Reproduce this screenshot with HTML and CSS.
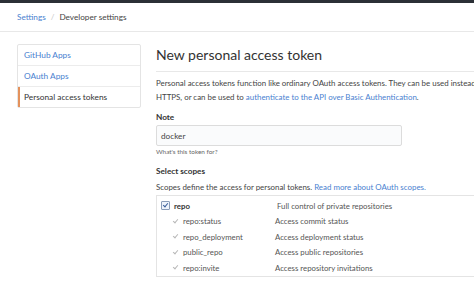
FILE: index.html
```html
<!DOCTYPE html>
<html>
<head>
<meta charset="utf-8">
<link rel="stylesheet" href="styles.css">
</head>
<body>
<div class="topbar"></div>
<div class="crumbs">
  <a class="crumb-link">Settings</a>
  <span class="sep">/</span>
  <span class="crumb-cur">Developer settings</span>
</div>
<div class="layout">
  <nav class="side">
    <a class="side-item">GitHub Apps</a>
    <a class="side-item">OAuth Apps</a>
    <a class="side-item selected">Personal access tokens</a>
  </nav>
  <main class="main">
    <h1 class="title">New personal access token</h1>
    <p class="intro">Personal access tokens function like ordinary OAuth access tokens. They can be used instead of a password for Git over<br>HTTPS, or can be used to <a class="link">authenticate to the API over Basic Authentication</a>.</p>
    <div class="field">
      <label class="label">Note</label>
      <div class="input">docker</div>
      <div class="hint">What's this token for?</div>
    </div>
    <div class="field scopes-field">
      <label class="label">Select scopes</label>
      <p class="scopes-desc">Scopes define the access for personal tokens. <a class="link">Read more about OAuth scopes.</a></p>
      <div class="scopes">
        <div class="row parent">
          <span class="cb checked"></span>
          <span class="name">repo</span>
          <span class="desc">Full control of private repositories</span>
        </div>
        <div class="row child">
          <span class="cb sub"></span>
          <span class="name">repo:status</span>
          <span class="desc">Access commit status</span>
        </div>
        <div class="row child">
          <span class="cb sub"></span>
          <span class="name">repo_deployment</span>
          <span class="desc">Access deployment status</span>
        </div>
        <div class="row child">
          <span class="cb sub"></span>
          <span class="name">public_repo</span>
          <span class="desc">Access public repositories</span>
        </div>
        <div class="row child">
          <span class="cb sub"></span>
          <span class="name">repo:invite</span>
          <span class="desc">Access repository invitations</span>
        </div>
      </div>
    </div>
  </main>
</div>
</body>
</html>
```
FILE: styles.css
```css
html, body {
  margin: 0;
  padding: 0;
  background: #fff;
  overflow: hidden;
  width: 474px;
  height: 282px;
  font-family: Lato, "Noto Sans", sans-serif;
  color: #24292e;
}
.topbar {
  height: 3px;
  background: #2b3036;
}
.crumbs {
  height: 28px;
  border-bottom: 1px solid #e8e8e8;
  display: flex;
  align-items: center;
  padding-left: 17px;
  font-size: 8.2px;
  gap: 5px;
}
.crumb-link { color: #4a7fd0; }
.sep { color: #c8c8c8; }
.crumb-cur { color: #444; }
.layout {
  display: flex;
  padding: 12px 0 0 17px;
  gap: 15px;
}
.side {
  width: 122px;
  flex: none;
  border: 1px solid #e4e4e4;
  border-radius: 2px;
  display: flex;
  flex-direction: column;
  align-self: flex-start;
}
.side-item {
  height: 20px;
  display: flex;
  align-items: center;
  padding-left: 6px;
  font-size: 8.3px;
  color: #4a7fd0;
  border-bottom: 1px solid #ececec;
}
.side-item:last-child { border-bottom: none; }
.side-item.selected {
  color: #333;
  border-left: 2px solid #e4925c;
  padding-left: 4px;
}
.main {
  width: 460px;
  flex: none;
}
.title {
  margin: 0;
  font-weight: 400;
  font-size: 14px;
  line-height: 22px;
  padding-bottom: 5px;
  border-bottom: 1px solid #e8e8e8;
  color: #333;
  white-space: nowrap;
}
.intro {
  margin: 4px 0 0;
  font-size: 7.9px;
  line-height: 14px;
  color: #444;
  white-space: nowrap;
}
.link { color: #4a7fd0; }
.field { margin-top: 7px; }
.scopes-field { margin-top: 10px; }
.label {
  display: block;
  font-weight: 700;
  font-size: 8.2px;
  line-height: 13px;
  color: #333;
}
.input {
  margin-top: 1px;
  width: 240px;
  height: 19px;
  border: 1px solid #dcdcdc;
  border-radius: 2px;
  background: #fafbfc;
  font-size: 8.2px;
  display: flex;
  align-items: center;
  padding-left: 4px;
  color: #444;
}
.hint {
  font-size: 6.4px;
  color: #666;
  margin-top: 2px;
}
.scopes-desc {
  margin: 3px 0 0;
  font-size: 7.9px;
  line-height: 13px;
  color: #444;
}
.scopes {
  margin-top: 1px;
  border: 1px solid #e4e4e4;
  border-right: none;
  padding: 2px 0 0 4px;
  width: 400px;
}
.row {
  display: flex;
  align-items: center;
  height: 15.5px;
  font-size: 7.8px;
  color: #555;
}
.row .desc { color: #555; }
.row .name { width: 103px; }
.row.parent .name { font-weight: 700; color: #333; width: 103px; }
.row.child { padding-left: 11px; }
.row.child .name { width: 92px; }
.cb {
  width: 7px;
  height: 7px;
  margin-right: 4px;
  flex: none;
  position: relative;
}
.cb.checked {
  border: 1px solid #8a9cb8;
  background: #eef3fb;
  border-radius: 1px;
}
.cb.checked::after {
  content: "";
  position: absolute;
  left: 2px;
  top: 0px;
  width: 2px;
  height: 4px;
  border: solid #3b5f9a;
  border-width: 0 1.3px 1.3px 0;
  transform: rotate(40deg);
}
.cb.sub::after {
  content: "";
  position: absolute;
  left: 2px;
  top: 0px;
  width: 2px;
  height: 4px;
  border: solid #b8b8b8;
  border-width: 0 1.2px 1.2px 0;
  transform: rotate(40deg);
}
```
